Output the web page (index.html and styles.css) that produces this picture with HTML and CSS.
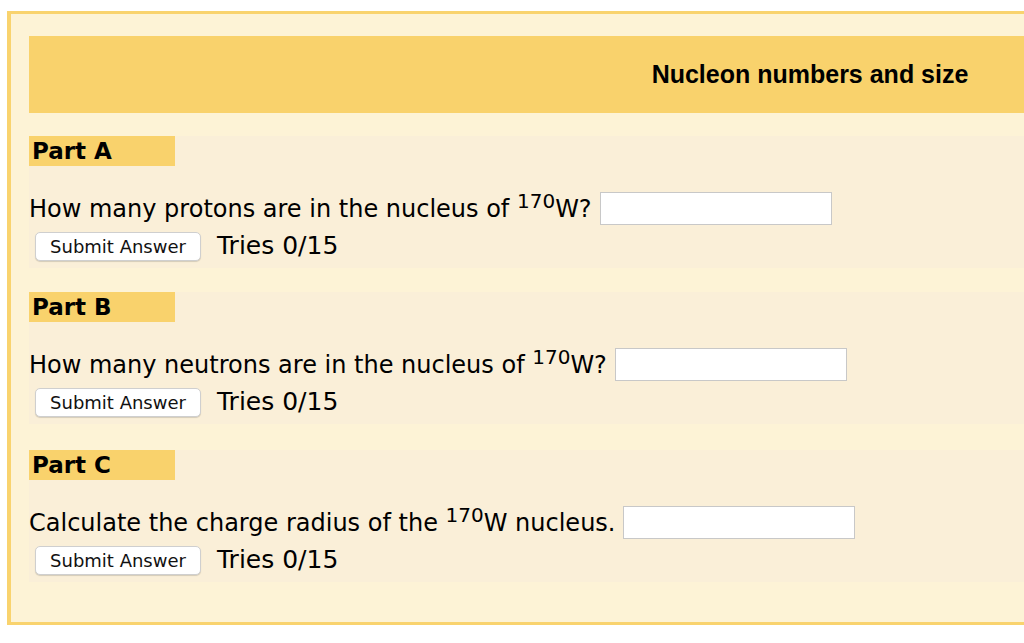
FILE: index.html
```html
<!DOCTYPE html>
<html>
<head>
<meta charset="utf-8">
<link rel="stylesheet" href="styles.css">
</head>
<body>
<div class="frame">
  <div class="header"><h1 class="title">Nucleon numbers and size</h1></div>

  <div class="part">
    <div class="label">Part A</div>
    <div class="q">
      <span class="q-text">How many protons are in the nucleus of <sup>170</sup>W?</span>
      <input class="answer" type="text">
    </div>
    <div class="actions">
      <button class="submit">Submit Answer</button>
      <span class="tries">Tries 0/15</span>
    </div>
  </div>

  <div class="part">
    <div class="label">Part B</div>
    <div class="q">
      <span class="q-text">How many neutrons are in the nucleus of <sup>170</sup>W?</span>
      <input class="answer" type="text">
    </div>
    <div class="actions">
      <button class="submit">Submit Answer</button>
      <span class="tries">Tries 0/15</span>
    </div>
  </div>

  <div class="part part-last">
    <div class="label">Part C</div>
    <div class="q">
      <span class="q-text">Calculate the charge radius of the <sup>170</sup>W nucleus.</span>
      <input class="answer" type="text">
    </div>
    <div class="actions">
      <button class="submit">Submit Answer</button>
      <span class="tries">Tries 0/15</span>
    </div>
  </div>
</div>
</body>
</html>
```

FILE: styles.css
```css
html, body {
  margin: 0;
  padding: 0;
  background: #ffffff;
  overflow: hidden;
}
body {
  font-family: "DejaVu Sans", Verdana, sans-serif;
  color: #000;
}
.frame {
  margin: 11px 0 0 7px;
  width: 1562px;
  border: 3px solid #f9d36e;
  border-left-width: 4px;
  background: #fdf3d6;
  padding: 22px 18px 40px 18px;
}
.header {
  background: #f9d26c;
  height: 77px;
  display: flex;
  align-items: center;
  justify-content: center;
}
.title {
  margin: 0;
  font-family: "Liberation Sans", Arial, sans-serif;
  font-weight: bold;
  font-size: 25px;
}
.part {
  background: #faefd8;
  margin-top: 23px;
  padding-bottom: 7px;
}
.part + .part {
  margin-top: 24px;
}
.part + .part-last {
  margin-top: 26px;
}
.label {
  width: 146px;
  height: 30px;
  background: #f9d26c;
  font-weight: bold;
  font-size: 23px;
  line-height: 31px;
  padding-left: 3px;
  box-sizing: border-box;
}
.q {
  display: flex;
  align-items: center;
  margin-top: 26px;
  height: 33px;
}
.q-text {
  font-size: 24px;
  line-height: 28px;
}
.q-text sup {
  line-height: 0;
  font-size: 20px;
  vertical-align: 9px;
}
.answer {
  width: 232px;
  height: 33px;
  box-sizing: border-box;
  margin: 0 0 0 8px;
  border: 1px solid #c8c8c8;
  background: #fff;
  padding: 0;
}
.actions {
  display: flex;
  align-items: center;
  margin-top: 7px;
  height: 29px;
}
.submit {
  margin: 0 0 0 6px;
  width: 166px;
  height: 29px;
  box-sizing: border-box;
  background: #fff;
  border: 1px solid #cfcfcf;
  border-radius: 5px;
  box-shadow: 0 1px 1px rgba(0,0,0,0.15);
  font-family: "DejaVu Sans", Verdana, sans-serif;
  font-size: 18px;
  color: #111;
  padding: 0;
}
.tries {
  margin-left: 16px;
  font-size: 25px;
  line-height: 28px;
  margin-top: -1px;
}
```
